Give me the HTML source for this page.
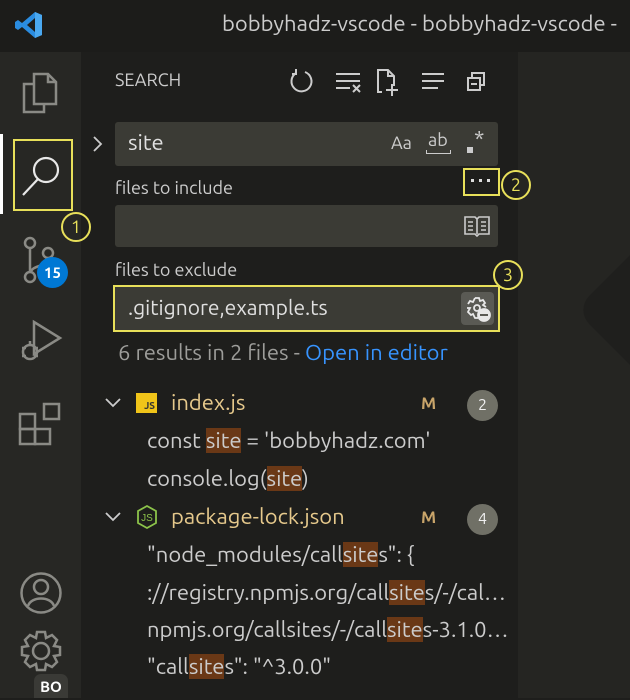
<!DOCTYPE html>
<html><head><style>
*{margin:0;padding:0;box-sizing:border-box}
body{width:630px;height:698px;overflow:hidden;background:#1e1e1c;font-family:"Ubuntu","Liberation Sans","DejaVu Sans",sans-serif;color:#cccccc;position:relative}
.a{position:absolute}
.hl{background:#6a3816}
.row{position:absolute;left:147px;font-size:22px;white-space:nowrap;color:#cccccc}
.lbl{font-size:18px;color:#cccccc}
.circ{position:absolute;width:30px;height:30px;border:2px solid #e8e05a;border-radius:50%;color:#e8e05a;font-size:18px;text-align:center;line-height:26px}
</style></head><body>
<div class="a" style="left:0;top:0;width:630px;height:52px;background:#1c1c1a"></div>
<svg class="a" style="left:14px;top:10px" width="30" height="30" viewBox="0 0 30 30"><path d="M21 2 L28 5 V25 L21 28 L8 17 L4 20 L1 18 V12 L4 10 L8 13 Z" fill="#2a8ce0"/><path d="M21 8 V22 L13 15 Z" fill="#1c1c1a"/><path d="M21 2 L28 5 V25 L21 28 Z" fill="#4aa8f0"/></svg>
<div class="a" style="left:222px;top:11px;font-size:22px;color:#cccccc;white-space:nowrap">bobbyhadz-vscode - bobbyhadz-vscode -</div>
<div class="a" style="left:0;top:52px;width:81px;height:646px;background:#272724"></div>
<div class="a" style="left:518px;top:52px;width:112px;height:646px;background:#252522"></div>
<div class="a" style="left:600px;top:250px;width:120px;height:120px;background:#1f1f1d;transform:rotate(45deg);border-radius:20px"></div>
<svg class="a" style="left:20px;top:70px" width="40" height="44" viewBox="0 0 40 44" fill="none" stroke="#8a8a85" stroke-width="2.5"><path d="M14 4 H28 L36 12 V34 H14 Z M28 4 V12 H36"/><path d="M14 14 H4 V42 H24 V34"/></svg>
<div class="a" style="left:0;top:134px;width:3px;height:80px;background:#fff"></div>
<div class="a" style="left:13px;top:139px;width:60px;height:72px;border:2px solid #e8e05a"></div>
<svg class="a" style="left:20px;top:152px" width="44" height="46" viewBox="0 0 44 46" fill="none" stroke="#e8e8e8" stroke-width="2.2"><circle cx="26" cy="18" r="12"/><path d="M18 27 L3 43"/></svg>
<div class="circ" style="left:61px;top:212px">1</div>
<svg class="a" style="left:22px;top:235px" width="36" height="50" viewBox="0 0 36 50" fill="none" stroke="#8a8a85" stroke-width="2.5"><circle cx="8" cy="8" r="5"/><circle cx="26" cy="18" r="5"/><circle cx="8" cy="42" r="5"/><path d="M8 13 V37 M26 23 C26 32 10 30 9 37"/></svg>
<div class="a" style="left:37px;top:257px;width:31px;height:31px;border-radius:50%;background:#0078d4;color:#fff;font-size:15px;font-weight:bold;text-align:center;line-height:31px">15</div>
<svg class="a" style="left:18px;top:318px" width="46" height="46" viewBox="0 0 46 46" fill="none" stroke="#8a8a85" stroke-width="2.5"><path d="M16 4 L42 20 L16 36 Z"/><circle cx="12" cy="34" r="7"/><path d="M4 30 H8 M4 38 H8 M16 30 H20 M16 38 H20 M12 27 V23"/></svg>
<svg class="a" style="left:18px;top:400px" width="46" height="46" viewBox="0 0 46 46" fill="none" stroke="#8a8a85" stroke-width="2.5"><rect x="2" y="14" width="15" height="15"/><rect x="2" y="29" width="15" height="15"/><rect x="17" y="29" width="15" height="15"/><rect x="26" y="4" width="15" height="15"/></svg>
<svg class="a" style="left:19px;top:571px" width="44" height="44" viewBox="0 0 44 44" fill="none" stroke="#8a8a85" stroke-width="2.5"><circle cx="22" cy="22" r="19.5"/><circle cx="22" cy="16" r="7"/><path d="M9 35 C12 25 32 25 35 35"/></svg>
<svg class="a" style="left:18px;top:628px" width="46" height="46" viewBox="0 0 46 46" fill="none" stroke="#8a8a85" stroke-width="2.5"><circle cx="23" cy="23" r="8"/><path d="M19 4 H27 L28 10 L34 7 L39 12 L36 18 L42 19 V27 L36 28 L39 34 L34 39 L28 36 L27 42 H19 L18 36 L12 39 L7 34 L10 28 L4 27 V19 L10 18 L7 12 L12 7 L18 10 Z"/></svg>
<div class="a" style="left:34px;top:674px;width:34px;height:24px;border-radius:7px 7px 0 0;background:#3a3a36;color:#fff;font-size:15px;font-weight:bold;text-align:center;line-height:26px">BO</div>
<div class="a" style="left:115px;top:70px;font-size:18px;color:#cccccc">SEARCH</div>
<svg class="a" style="left:288px;top:66px" width="210" height="30" viewBox="0 0 210 30" fill="none" stroke="#cccccc" stroke-width="2"><path d="M8 7 A10 10 0 1 0 17 6 M8 3 V8 H4"/><path d="M48 8 H72 M48 15 H72 M48 22 H62 M65 19 L72 26 M72 19 L65 26"/><path d="M94 26 H90 V4 H100 L106 10 V20 M100 4 V10 H106 M98 24 H110 M104 18 V30"/><path d="M134 8 H156 M134 15 H156 M134 22 H150"/><rect x="180" y="12" width="12" height="12"/><path d="M184 12 V7 H196 V19 H192 M183 18 H189"/></svg>
<svg class="a" style="left:91px;top:134px" width="14" height="20" viewBox="0 0 14 20" fill="none" stroke="#cccccc" stroke-width="1.8"><path d="M3 3 L10 10 L3 17"/></svg>
<div class="a" style="left:115px;top:122px;width:383px;height:44px;background:#3b3b35;border-radius:3px"></div>
<div class="a" style="left:128px;top:130px;font-size:22px;color:#e0e0e0">site</div>
<div class="a" style="left:391px;top:133px;font-size:18px;color:#cccccc">Aa</div>
<div class="a" style="left:428px;top:130px;font-size:18px;color:#cccccc">ab</div>
<div class="a" style="left:426px;top:150px;width:25px;height:4px;border:1.5px solid #ccc;border-top:none"></div>
<div class="a" style="left:467px;top:147px;width:6px;height:6px;background:#ccc"></div>
<div class="a" style="left:474px;top:126px;font-size:22px;color:#cccccc">*</div>
<div class="a lbl" style="left:115px;top:178px">files to include</div>
<div class="a" style="left:463px;top:168px;width:37px;height:28px;border:2px solid #e8e05a"></div>
<div class="a" style="left:471px;top:179px;width:3px;height:3px;background:#ddd;box-shadow:8px 0 #ddd,16px 0 #ddd"></div>
<div class="circ" style="left:501px;top:170px">2</div>
<div class="a" style="left:115px;top:205px;width:383px;height:42px;background:#3b3b35;border-radius:3px"></div>
<svg class="a" style="left:464px;top:215px" width="26" height="22" viewBox="0 0 26 22" fill="none" stroke="#cccccc" stroke-width="1.6"><path d="M1 2 H11 L13 4 L15 2 H25 V19 H15 L13 21 L11 19 H1 Z M13 4 V19 M4 7 H9 M4 11 H9 M4 15 H9 M17 7 H22 M17 11 H22 M17 15 H22"/></svg>
<div class="a lbl" style="left:115px;top:260px">files to exclude</div>
<div class="circ" style="left:493px;top:260px">3</div>
<div class="a" style="left:113px;top:285px;width:387px;height:47px;background:#3b3b35;border:2px solid #e8e05a"></div>
<div class="a" style="left:128px;top:295px;font-size:21px;color:#e0e0e0">.gitignore,example.ts</div>
<div class="a" style="left:461px;top:292px;width:33px;height:33px;background:#5a5a54;border-radius:4px"></div>
<svg class="a" style="left:464px;top:295px" width="28" height="28" viewBox="0 0 28 28" fill="none" stroke="#e8e8e8" stroke-width="1.8"><path d="M11 3 H15 L16 6 L19 5 L21 8 L19 10 L22 12 M4 9 L6 6 L9 7 L11 3 M3 13 L6 13 L4 17 L7 20 L9 19 L11 23 H14"/><circle cx="13" cy="13" r="3"/><circle cx="20" cy="20" r="6" fill="#e8e8e8"/><path d="M16 20 H24" stroke="#5a5a54" stroke-width="2"/></svg>
<div class="a" style="left:118px;top:340px;font-size:22px;color:#9d9d9a;white-space:nowrap">6 results in 2 files - <span style="color:#3794ff">Open in editor</span></div>
<svg class="a" style="left:104px;top:396px" width="18" height="14" viewBox="0 0 18 14" fill="none" stroke="#cccccc" stroke-width="1.8"><path d="M2 3 L9 10 L16 3"/></svg>
<div class="a" style="left:136px;top:393px;width:21px;height:20px;background:#f0c419;color:#333;font-size:10px;font-weight:bold;text-align:right;padding-right:2px;line-height:26px">JS</div>
<div class="a" style="left:171px;top:390px;font-size:22px;color:#e6c98c">index.js</div>
<div class="a" style="left:421px;top:394px;font-size:17px;font-weight:bold;color:#c9a56a">M</div>
<div class="a" style="left:467px;top:390px;width:31px;height:31px;border-radius:50%;background:#707066;color:#f0f0f0;font-size:16px;text-align:center;line-height:31px">2</div>
<div class="row" style="top:428px">const <span class="hl">site</span> = 'bobbyhadz.com'</div>
<div class="row" style="top:466px">console.log(<span class="hl">site</span>)</div>
<svg class="a" style="left:104px;top:510px" width="18" height="14" viewBox="0 0 18 14" fill="none" stroke="#cccccc" stroke-width="1.8"><path d="M2 3 L9 10 L16 3"/></svg>
<svg class="a" style="left:135px;top:504px" width="24" height="26" viewBox="0 0 24 26" fill="none" stroke="#8cc34a" stroke-width="1.8"><path d="M12 2 L21 7 V19 L12 24 L3 19 V7 Z"/><text x="12" y="17" font-size="10" fill="#8cc34a" stroke="none" text-anchor="middle" font-family="Liberation Sans">JS</text></svg>
<div class="a" style="left:171px;top:504px;font-size:22px;color:#e6c98c">package-lock.json</div>
<div class="a" style="left:421px;top:508px;font-size:17px;font-weight:bold;color:#c9a56a">M</div>
<div class="a" style="left:467px;top:504px;width:31px;height:31px;border-radius:50%;background:#707066;color:#f0f0f0;font-size:16px;text-align:center;line-height:31px">4</div>
<div class="row" style="top:542px">"node_modules/call<span class="hl">site</span>s": {</div>
<div class="row" style="top:580px">://registry.npmjs.org/call<span class="hl">site</span>s/-/cal…</div>
<div class="row" style="top:617px">npmjs.org/callsites/-/call<span class="hl">site</span>s-3.1.0…</div>
<div class="row" style="top:654px">"call<span class="hl">site</span>s": "^3.0.0"</div>
</body></html>
